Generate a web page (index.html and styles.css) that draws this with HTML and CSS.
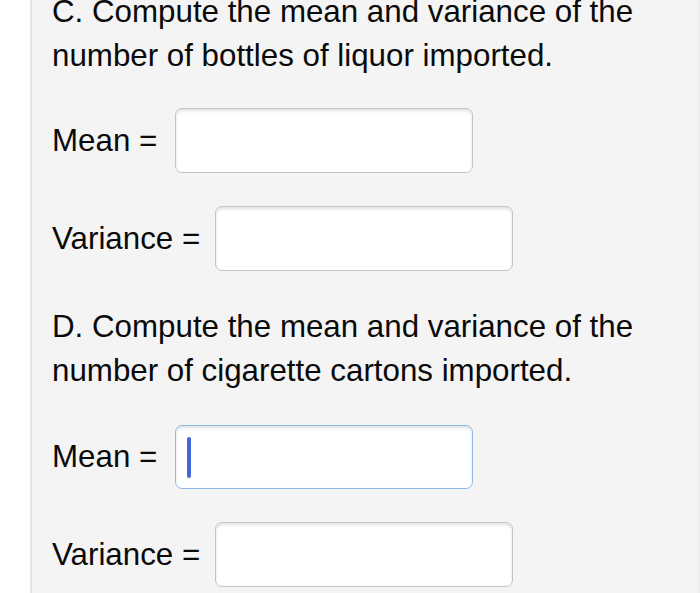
FILE: index.html
```html
<!DOCTYPE html>
<html>
<head>
<meta charset="utf-8">
<link rel="stylesheet" href="styles.css">
</head>
<body>
<div class="panel">
  <p class="question q-c">C. Compute the mean and variance of the number of bottles of liquor imported.</p>
  <div class="row row-mean1">
    <span class="label">Mean =</span>
    <div class="field field-mean"></div>
  </div>
  <div class="row row-var1">
    <span class="label">Variance =</span>
    <div class="field field-var"></div>
  </div>
  <p class="question q-d">D. Compute the mean and variance of the number of cigarette cartons imported.</p>
  <div class="row row-mean2">
    <span class="label">Mean =</span>
    <div class="field field-mean focused"><span class="caret"></span></div>
  </div>
  <div class="row row-var2">
    <span class="label">Variance =</span>
    <div class="field field-var"></div>
  </div>
</div>
</body>
</html>
```

FILE: styles.css
```css
html, body {
  margin: 0;
  padding: 0;
  background: #ffffff;
  height: 593px;
  overflow: hidden;
}

.panel {
  margin-left: 30px;
  height: 593px;
  box-sizing: border-box;
  background: #f4f4f4;
  border-left: 2px solid #e4e4e4;
  border-right: 2px solid #ececec;
  padding-left: 20px;
  font-family: "Liberation Sans", Arial, Helvetica, sans-serif;
  font-size: 31.3px;
  color: #0a0a0a;
  overflow: hidden;
}

.question {
  margin: 0;
  line-height: 44px;
  width: 600px;
}

.q-c {
  margin-top: -10px;
}

.q-d {
  margin-top: 34px;
}

.row {
  display: flex;
  align-items: center;
}

.row-mean1 { margin-top: 30px; }
.row-var1 { margin-top: 33px; }
.row-mean2 { margin-top: 32px; }
.row-var2 { margin-top: 33px; }

.label {
  white-space: nowrap;
}

.field {
  box-sizing: border-box;
  width: 298px;
  height: 65px;
  background: #ffffff;
  border: 1.5px solid #c4c4c4;
  border-radius: 7px;
  box-shadow: inset 0 2px 3px rgba(0, 0, 0, 0.12);
  display: flex;
  align-items: center;
}

.field-mean {
  margin-left: 18px;
}

.field-var {
  margin-left: 15px;
}

.focused {
  border-color: #8dbbe9;
  height: 64px;
}

.caret {
  display: block;
  width: 4px;
  height: 41px;
  margin-left: 11px;
  background: #4565dc;
  border-radius: 2px;
}
```
